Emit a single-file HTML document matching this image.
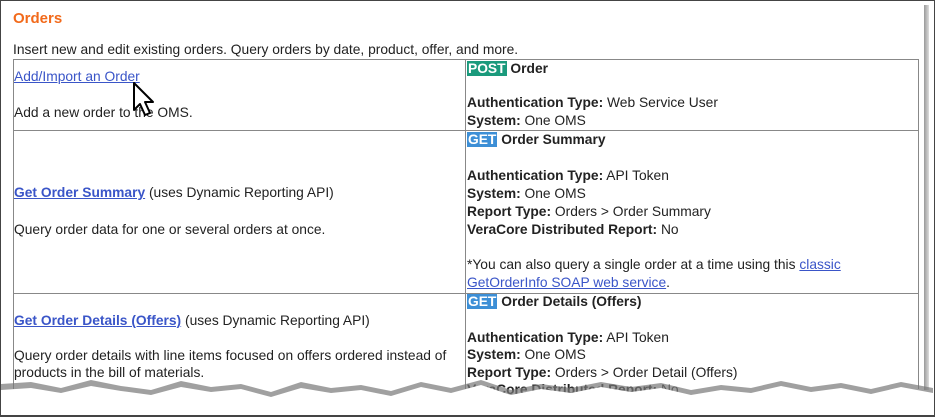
<!DOCTYPE html>
<html><head><meta charset="utf-8"><style>
body{margin:0;width:935px;height:417px;overflow:hidden;background:#fff;font-family:"Liberation Sans",sans-serif;font-size:13.8px;color:#222;position:relative}
.frame{position:absolute;left:0;top:0;width:933px;height:415px;border:1px solid #444}
.shadow{position:absolute;left:924px;top:5px;width:5px;height:385px;background:linear-gradient(90deg,#999,#ddd)}
.t{position:absolute;white-space:nowrap;line-height:18px}
a{color:#3a55c8;text-decoration:underline}
b{font-weight:bold}
.h{position:absolute;left:0;height:1px;background:#888}
.v{position:absolute;width:1px;background:#888}
.post{background:#1a9a7c;color:#fff;font-weight:bold;padding:0 1px}
.get{background:#3d8fd6;color:#fff;font-weight:bold;padding:0 1px}
</style></head><body>
<div class="frame"></div>
<div class="shadow"></div>
<div class="t" style="left:13px;top:10px;color:#f26a1b;font-size:15px;font-weight:bold">Orders</div>
<div class="t" style="left:13px;top:41px">Insert new and edit existing orders. Query orders by date, product, offer, and more.</div>
<div class="h" style="left:13px;top:59px;width:906px"></div>
<div class="h" style="left:13px;top:130px;width:906px"></div>
<div class="h" style="left:13px;top:293px;width:906px"></div>
<div class="v" style="left:13px;top:59px;height:330px"></div>
<div class="v" style="left:465px;top:59px;height:330px"></div>
<div class="v" style="left:918px;top:59px;height:330px"></div>

<div class="t" style="left:14px;top:68px"><a>Add/Import an Order</a></div>
<div class="t" style="left:14px;top:104px">Add a new order to the OMS.</div>
<div class="t" style="left:467px;top:60px"><span class="post">POST</span> <b>Order</b></div>
<div class="t" style="left:467px;top:94px"><b>Authentication Type:</b> Web Service User</div>
<div class="t" style="left:467px;top:112px"><b>System:</b> One OMS</div>

<div class="t" style="left:14px;top:184px"><a><b>Get Order Summary</b></a> (uses Dynamic Reporting API)</div>
<div class="t" style="left:14px;top:221px">Query order data for one or several orders at once.</div>
<div class="t" style="left:467px;top:131px"><span class="get">GET</span> <b>Order Summary</b></div>
<div class="t" style="left:467px;top:167px"><b>Authentication Type:</b> API Token</div>
<div class="t" style="left:467px;top:185px"><b>System:</b> One OMS</div>
<div class="t" style="left:467px;top:203px"><b>Report Type:</b> Orders &gt; Order Summary</div>
<div class="t" style="left:467px;top:221px"><b>VeraCore Distributed Report:</b> No</div>
<div class="t" style="left:467px;top:256px">*You can also query a single order at a time using this <a>classic</a></div>
<div class="t" style="left:467px;top:274px"><a>GetOrderInfo SOAP web service</a>.</div>

<div class="t" style="left:14px;top:312px"><a><b>Get Order Details (Offers)</b></a> (uses Dynamic Reporting API)</div>
<div class="t" style="left:14px;top:347px">Query order details with line items focused on offers ordered instead of</div>
<div class="t" style="left:14px;top:364px">products in the bill of materials.</div>
<div class="t" style="left:467px;top:293px"><span class="get">GET</span> <b>Order Details (Offers)</b></div>
<div class="t" style="left:467px;top:329px"><b>Authentication Type:</b> API Token</div>
<div class="t" style="left:467px;top:346px"><b>System:</b> One OMS</div>
<div class="t" style="left:467px;top:364px"><b>Report Type:</b> Orders &gt; Order Detail (Offers)</div>
<div class="t" style="left:467px;top:381px"><b>VeraCore Distributed Report:</b> No</div>

<svg style="position:absolute;left:1px;top:370px" width="933" height="46">
<polygon fill="#777" opacity="0.7" points="0,14 30,12 60,18 90,10 120,16 150,20 180,11 210,17 240,14 270,22 300,12 330,18 360,15 390,21 420,12 450,18 480,10 510,20 540,14 570,18 600,12 630,17 660,13 690,20 720,15 750,18 780,11 810,17 840,13 870,19 900,12 932,18 932,46 0,46"/>
<polygon fill="#fff" points="0,20 30,18 60,23 90,16 120,21 150,25 180,17 210,22 240,19 270,27 300,18 330,23 360,20 390,26 420,17 450,23 480,15 510,25 540,19 570,23 600,17 630,22 660,18 690,25 720,20 750,23 780,16 810,22 840,18 870,24 900,17 932,23 932,45 0,45"/>
<rect x="0" y="45" width="933" height="1" fill="#444"/>
</svg>
<svg style="position:absolute;left:132px;top:82px" width="30" height="38" viewBox="0 0 30 38">
<path d="M2 1 L2 28 L8 22 L13 33 L18 31 L13 20 L21 20 Z" fill="#fff" stroke="#000" stroke-width="2" stroke-linejoin="round"/>
</svg>
</body></html>
